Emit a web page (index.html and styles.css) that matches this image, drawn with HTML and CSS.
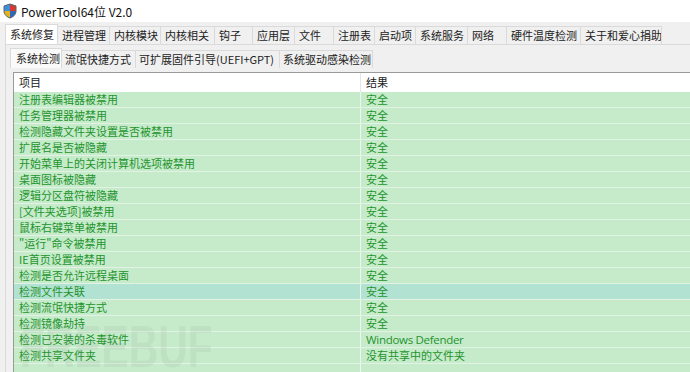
FILE: index.html
```html
<!DOCTYPE html>
<html lang="zh-CN">
<head>
    <meta charset="UTF-8">
    <title>PowerTool64位 V2.0</title>
    <link rel="stylesheet" href="styles.css">
</head>
<body>
    <div class="window">
        <div class="titlebar">
            <svg class="app-icon" width="16" height="16" viewBox="0 0 16 16">
                <path d="M8 1 L14 3 L14 8 C14 11.5 11 14 8 15 C5 14 2 11.5 2 8 L2 3 Z" fill="#2f6fc4"/>
                <path d="M8 1 L14 3 L14 8 L8 8 Z" fill="#d9382c"/>
                <path d="M2 8 L8 8 L8 15 C5 14 2 11.5 2 8 Z" fill="#e8b21c"/>
                <path d="M8 1 L2 3 L2 8 L8 8 Z" fill="#3d8fdc"/>
                <path d="M8 8 L14 8 C14 11.5 11 14 8 15 Z" fill="#2c6bb8"/>
                <path d="M8 1 L14 3 L14 8 C14 11.5 11 14 8 15 C5 14 2 11.5 2 8 L2 3 Z" fill="none" stroke="#5a6670" stroke-width="1"/>
            </svg>
            <span class="title">PowerTool64位 V2.0</span>
        </div>

        <div class="main">
            <div class="tabs top-tabs">
                <div class="tab active w53">系统修复</div>
                <div class="tab w52">进程管理</div>
                <div class="tab w51">内核模块</div>
                <div class="tab w54">内核相关</div>
                <div class="tab w38">钩子</div>
                <div class="tab w42">应用层</div>
                <div class="tab w39">文件</div>
                <div class="tab w41">注册表</div>
                <div class="tab w41">启动项</div>
                <div class="tab w52">系统服务</div>
                <div class="tab w39">网络</div>
                <div class="tab w74">硬件温度检测</div>
                <div class="tab w81">关于和爱心捐助</div>
            </div>

            <div class="panel">
                <div class="tabs sub-tabs">
                    <div class="tab active w52">系统检测</div>
                    <div class="tab w74">流氓快捷方式</div>
                    <div class="tab w144">可扩展固件引导(UEFI+GPT)</div>
                    <div class="tab w93">系统驱动感染检测</div>
                </div>

                <div class="list">
                    <div class="row head">
                        <div class="cell">项目</div>
                        <div class="cell">结果</div>
                    </div>
                    <div class="row"><div class="cell">注册表编辑器被禁用</div><div class="cell">安全</div></div>
                    <div class="row"><div class="cell">任务管理器被禁用</div><div class="cell">安全</div></div>
                    <div class="row"><div class="cell">检测隐藏文件夹设置是否被禁用</div><div class="cell">安全</div></div>
                    <div class="row"><div class="cell">扩展名是否被隐藏</div><div class="cell">安全</div></div>
                    <div class="row"><div class="cell">开始菜单上的关闭计算机选项被禁用</div><div class="cell">安全</div></div>
                    <div class="row"><div class="cell">桌面图标被隐藏</div><div class="cell">安全</div></div>
                    <div class="row"><div class="cell">逻辑分区盘符被隐藏</div><div class="cell">安全</div></div>
                    <div class="row"><div class="cell">[文件夹选项]被禁用</div><div class="cell">安全</div></div>
                    <div class="row"><div class="cell">鼠标右键菜单被禁用</div><div class="cell">安全</div></div>
                    <div class="row"><div class="cell">"运行"命令被禁用</div><div class="cell">安全</div></div>
                    <div class="row"><div class="cell">IE首页设置被禁用</div><div class="cell">安全</div></div>
                    <div class="row"><div class="cell">检测是否允许远程桌面</div><div class="cell">安全</div></div>
                    <div class="row selected"><div class="cell">检测文件关联</div><div class="cell">安全</div></div>
                    <div class="row"><div class="cell">检测流氓快捷方式</div><div class="cell">安全</div></div>
                    <div class="row"><div class="cell">检测镜像劫持</div><div class="cell">安全</div></div>
                    <div class="row"><div class="cell">检测已安装的杀毒软件</div><div class="cell latin">Windows Defender</div></div>
                    <div class="row"><div class="cell">检测共享文件夹</div><div class="cell">没有共享中的文件夹</div></div>
                    <div class="row"><div class="cell"></div><div class="cell"></div></div>
                    <div class="watermark" aria-hidden="true">FREEBUF</div>
                </div>
            </div>
        </div>
    </div>
</body>
</html>
```

FILE: styles.css
```css
body {
    margin: 0;
    padding: 0;
    font-family: "Noto Sans CJK SC", "Noto Sans", sans-serif;
    font-size: 11px;
    color: #222;
    background-color: #f0f0f0;
}

.window {
    width: 690px;
    height: 372px;
    overflow: hidden;
    background-color: #f0f0f0;
}

.titlebar {
    height: 22px;
    background-color: #fff;
    display: flex;
    align-items: center;
    padding-left: 2px;
}

.app-icon {
    margin-right: 3px;
}

.title {
    font-size: 12px;
    color: #111;
}

.main {
    padding: 2px 0 0 5px;
}

.tabs {
    display: flex;
    align-items: flex-end;
}

.tab {
    box-sizing: border-box;
    height: 18px;
    line-height: 17px;
    padding-left: 4px;
    border: 1px solid #dadada;
    border-left: none;
    border-bottom: none;
    color: #222;
    white-space: nowrap;
    overflow: hidden;
}

.tab.active {
    height: 20px;
    line-height: 19px;
    background-color: #fff;
    border-left: 1px solid #dadada;
}

.w38 { width: 38px; }
.w39 { width: 39px; }
.w41 { width: 41px; }
.w42 { width: 42px; }
.w51 { width: 51px; }
.w52 { width: 52px; }
.w53 { width: 53px; }
.w54 { width: 54px; }
.w74 { width: 74px; }
.w81 { width: 81px; }
.w93 { width: 93px; }
.w144 { width: 144px; }

.panel {
    border: 1px solid #dadada;
    border-right: none;
    padding: 3px 0 0 4px;
}

.sub-tabs .tab {
    background-color: #f0f0f0;
    padding-left: 3px;
}

.sub-tabs .tab.active {
    background-color: #fafafa;
    padding-left: 5px;
}

.list {
    position: relative;
    margin: 4px 0 0 3px;
    border: 1px solid #9a9a9a;
    border-bottom: none;
    border-right: none;
    background-color: #c6ebcb;
}

.row {
    display: grid;
    grid-template-columns: 346px 1fr;
    height: 15px;
    line-height: 15px;
    border-bottom: 1px solid #e2f3e3;
    color: #23942b;
}

.row.head {
    height: 19px;
    line-height: 19px;
    background-color: #fff;
    color: #222;
    border-bottom: none;
}

.row.selected {
    background-color: #b2e2d2;
}

.cell {
    padding-left: 5px;
    white-space: nowrap;
    overflow: hidden;
}

.cell + .cell {
    border-left: 1px solid #eef7ef;
}

.row.head .cell + .cell {
    border-left: 1px solid #e5e5e5;
}

.latin {
    font-family: "Open Sans", "Noto Sans", sans-serif;
    font-size: 11.5px;
    letter-spacing: -0.3px;
}

.watermark {
    position: absolute;
    left: 6px;
    top: 244px;
    font-family: "Liberation Sans", sans-serif;
    font-weight: bold;
    font-size: 60px;
    line-height: 60px;
    transform: scaleX(0.68);
    transform-origin: left top;
    color: rgba(140, 155, 140, 0.12);
    pointer-events: none;
}
```
